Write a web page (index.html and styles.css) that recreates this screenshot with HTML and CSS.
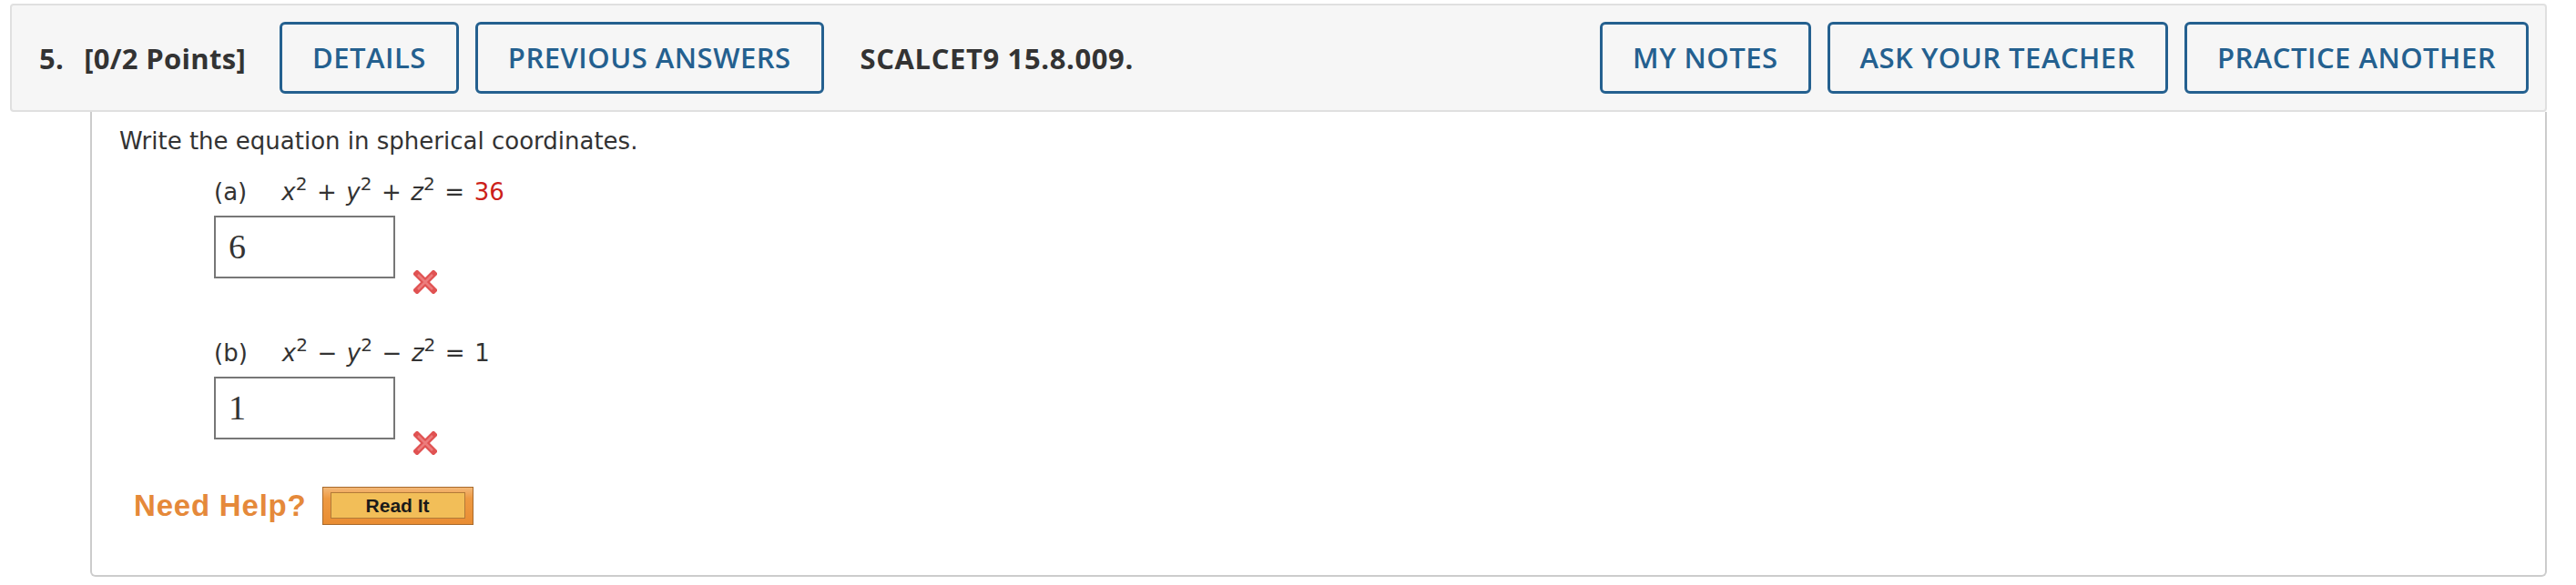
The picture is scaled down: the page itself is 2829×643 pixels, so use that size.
FILE: index.html
```html
<!DOCTYPE html>
<html>
<head>
<meta charset="utf-8">
<title>Question 5</title>
<link rel="stylesheet" href="styles.css">
</head>
<body>
<div class="question">
  <div class="q-header">
    <div class="q-title"><span class="q-num">5.</span><span class="q-points">[0/2 Points]</span></div>
    <div class="btn-group">
      <button class="q-btn">DETAILS</button>
      <button class="q-btn">PREVIOUS ANSWERS</button>
    </div>
    <div class="q-ref">SCALCET9 15.8.009.</div>
    <div class="spacer"></div>
    <div class="btn-group">
      <button class="q-btn">MY NOTES</button>
      <button class="q-btn">ASK YOUR TEACHER</button>
      <button class="q-btn">PRACTICE ANOTHER</button>
    </div>
  </div>
  <div class="q-body">
    <p class="instructions">Write the equation in spherical coordinates.</p>
    <div class="part part-a">
      <div class="prompt"><span class="label">(a)</span><span class="eq"><i>x</i><sup>2</sup> + <i>y</i><sup>2</sup> + <i>z</i><sup>2</sup> = <span class="given">36</span></span></div>
      <div class="answer">
        <div class="ans-box">6</div>
        <svg class="wrong" viewBox="0 0 26 26" aria-label="incorrect">
          <path d="M4 4 L22 22 M22 4 L4 22" stroke="#e05252" stroke-width="7" stroke-linecap="square" fill="none"/>
          <path d="M5 5 L21 21 M21 5 L5 21" stroke="#ec7c7c" stroke-width="2.5" fill="none"/>
        </svg>
      </div>
    </div>
    <div class="part part-b">
      <div class="prompt"><span class="label">(b)</span><span class="eq"><i>x</i><sup>2</sup> − <i>y</i><sup>2</sup> − <i>z</i><sup>2</sup> = 1</span></div>
      <div class="answer">
        <div class="ans-box">1</div>
        <svg class="wrong" viewBox="0 0 26 26" aria-label="incorrect">
          <path d="M4 4 L22 22 M22 4 L4 22" stroke="#e05252" stroke-width="7" stroke-linecap="square" fill="none"/>
          <path d="M5 5 L21 21 M21 5 L5 21" stroke="#ec7c7c" stroke-width="2.5" fill="none"/>
        </svg>
      </div>
    </div>
    <div class="help">
      <span class="need-help">Need Help?</span>
      <span class="read-it"><span class="read-it-inner">Read It</span></span>
    </div>
  </div>
</div>
</body>
</html>
```
FILE: styles.css
```css
html, body {
  margin: 0;
  padding: 0;
  background: #ffffff;
}

body {
  font-family: "DejaVu Sans", Verdana, sans-serif;
  color: #333333;
}

.question {
  margin: 4px 32px 0 11px;
}

.q-header {
  display: flex;
  align-items: center;
  background: #f6f6f6;
  border: 2px solid #e0e0e0;
  border-radius: 4px;
  padding: 18px 18px 18px 30px;
  font-family: "Open Sans", "Liberation Sans", sans-serif;
}

.q-title {
  display: flex;
  gap: 22px;
  font-weight: 700;
  font-size: 31px;
  letter-spacing: 0.3px;
  color: #333333;
  margin-right: 37px;
}

.btn-group {
  display: flex;
  gap: 18px;
}

.q-btn {
  box-sizing: border-box;
  height: 79px;
  padding: 0 33px;
  background: transparent;
  border: 3px solid #24608f;
  border-radius: 6px;
  color: #24608f;
  font-family: "Open Sans", "Liberation Sans", sans-serif;
  font-weight: 600;
  font-size: 31px;
  letter-spacing: 0.5px;
  line-height: 1;
}

.q-ref {
  margin-left: 40px;
  font-weight: 700;
  font-size: 31px;
  letter-spacing: 0.6px;
  color: #333333;
}

.spacer {
  flex: 1;
}

.q-body {
  margin-left: 88px;
  border: 2px solid #cccccc;
  border-top: none;
  border-radius: 0 0 6px 6px;
  padding: 16px 30px 55px;
}

.instructions {
  margin: 0;
  font-size: 26px;
  line-height: 32px;
}

.part {
  margin-left: 104px;
}

.part-a {
  margin-top: 24px;
}

.part-b {
  margin-top: 49px;
}

.prompt {
  font-size: 26px;
  line-height: 32px;
  white-space: nowrap;
}

.label {
  margin-right: 38px;
}

.eq {
  word-spacing: 2.3px;
}

.eq i {
  font-style: italic;
}

.eq sup {
  font-size: 20px;
  line-height: 0;
  vertical-align: 11px;
}

.given {
  color: #cc1f1a;
}

.answer {
  display: flex;
  align-items: flex-start;
  margin-top: 10px;
}

.ans-box {
  box-sizing: border-box;
  width: 199px;
  height: 69px;
  border: 2px solid #777777;
  padding-left: 14px;
  font-family: "Liberation Serif", "Times New Roman", serif;
  font-size: 38px;
  line-height: 64px;
  color: #333333;
}

.wrong {
  width: 26px;
  height: 26px;
  margin-left: 20px;
  margin-top: 60px;
}

.help {
  display: flex;
  align-items: center;
  margin-left: 16px;
  margin-top: 35px;
}

.need-help {
  font-family: "Liberation Sans", Arial, sans-serif;
  font-weight: 700;
  font-size: 33px;
  letter-spacing: 0.8px;
  color: #e5893a;
}

.read-it {
  box-sizing: border-box;
  display: flex;
  width: 166px;
  height: 42px;
  margin-left: 17px;
  padding: 5px 8px 6px 8px;
  border: 1px solid #a86a2c;
  background: linear-gradient(#f3b877 0, #ee9a42 30%, #e98d33 100%);
}

.read-it-inner {
  flex: 1;
  display: flex;
  align-items: center;
  justify-content: center;
  border: 1px solid #b27a38;
  background: #f2be58;
  font-family: "Liberation Sans", Arial, sans-serif;
  font-weight: 700;
  font-size: 21px;
  color: #1a1a1a;
}
```
